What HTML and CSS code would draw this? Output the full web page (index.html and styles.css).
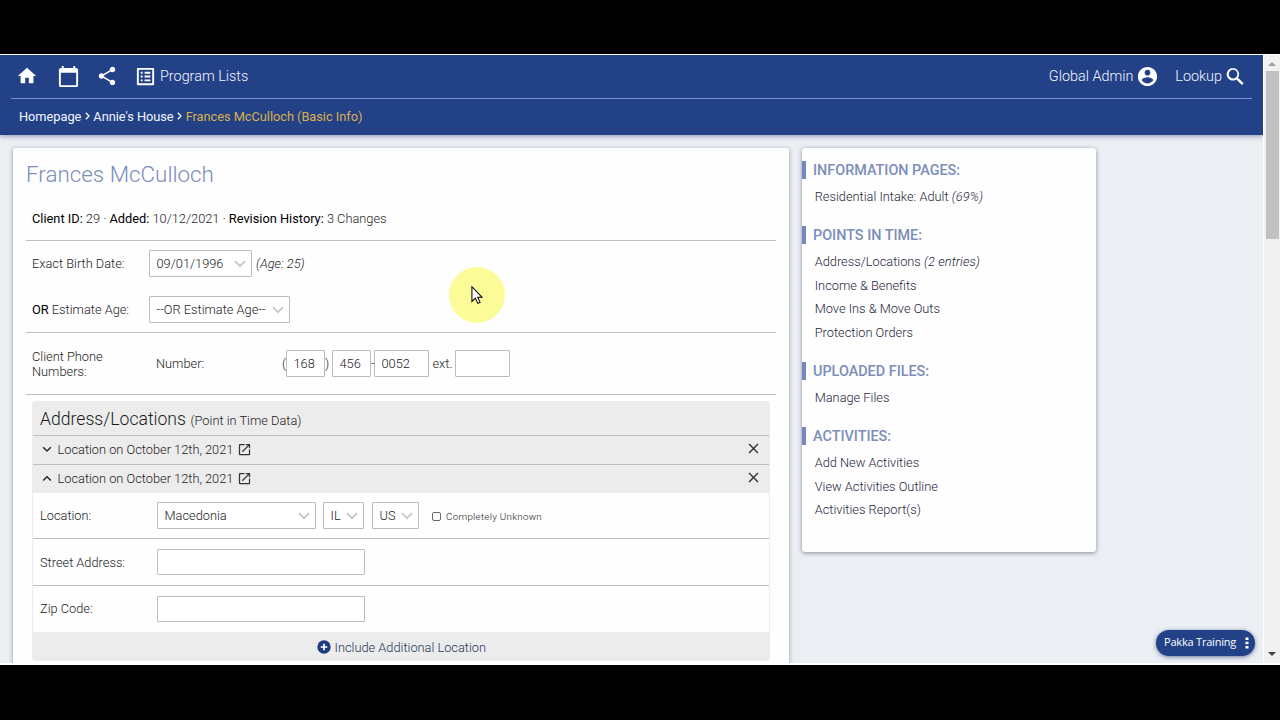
FILE: index.html
```html
<!DOCTYPE html>
<html lang="en">
<head>
<meta charset="utf-8">
<title>Frances McCulloch (Basic Info)</title>
<link rel="stylesheet" href="styles.css">
</head>
<body>
<svg width="0" height="0" class="defs">
  <symbol id="chev" viewBox="0 0 12 8"><path d="M1 1.2l5 5 5-5" fill="none" stroke="#c8c8c8" stroke-width="1.8"/></symbol>
  <symbol id="open" viewBox="0 0 24 24"><path d="M19 19H5V5h7V3H5a2 2 0 0 0-2 2v14a2 2 0 0 0 2 2h14c1.100 0 2-.9 2-2v-7h-2v7zM14 3v2h3.590l-9.830 9.830 1.410 1.410L19 6.410V10h2V3h-7z"/></symbol>
  <symbol id="close" viewBox="0 0 24 24"><path d="M19 6.410L17.590 5 12 10.590 6.410 5 5 6.410 10.590 12 5 17.590 6.410 19 12 13.410 17.590 19 19 17.590 13.410 12z"/></symbol>
</svg>
<div class="screen">
  <div class="app">
    <header class="header">
      <nav class="topbar">
        <svg class="icon home" viewBox="0 0 24 24"><path d="M10 20v-6h4v6h5v-8h3L12 3 2 12h3v8z"/></svg>
        <svg class="icon calendar" viewBox="0 0 24 24"><path d="M20 3h-1V1h-2v2H7V1H5v2H4c-1.100 0-2 .9-2 2v16c0 1.100.9 2 2 2h16c1.100 0 2-.9 2-2V5c0-1.100-.9-2-2-2zm0 18H4V8h16v13z"/></svg>
        <svg class="icon share" viewBox="0 0 24 24"><path d="M18 16.080c-.76 0-1.440.3-1.960.77L8.910 12.700c.05-.23.09-.46.09-.7s-.04-.47-.09-.7l7.050-4.110c.54.5 1.250.81 2.040.81 1.660 0 3-1.340 3-3s-1.340-3-3-3-3 1.340-3 3c0 .24.040.47.090.7L8.040 9.810C7.500 9.310 6.790 9 6 9c-1.660 0-3 1.340-3 3s1.340 3 3 3c.79 0 1.500-.31 2.040-.81l7.120 4.160c-.05.21-.08.43-.08.65 0 1.610 1.310 2.920 2.920 2.920s2.920-1.310 2.920-2.920-1.310-2.920-2.920-2.920z"/></svg>
        <svg class="icon list" viewBox="0 0 24 24"><path d="M19 5v14H5V5h14m1.100-2H3.900c-.5 0-.9.4-.9.9v16.200c0 .4.4.9.9.9h16.200c.4 0 .9-.5.9-.9V3.900c0-.5-.5-.9-.9-.9zM11 7h6v2h-6V7zm0 4h6v2h-6v-2zm0 4h6v2h-6zM7 7h2v2H7zm0 4h2v2H7zm0 4h2v2H7z"/></svg>
        <span class="programs">Program Lists</span>
        <span class="admin">Global Admin</span>
        <svg class="icon account" viewBox="0 0 24 24"><path d="M12 2C6.480 2 2 6.480 2 12s4.480 10 10 10 10-4.480 10-10S17.520 2 12 2zm0 3c1.660 0 3 1.340 3 3s-1.340 3-3 3-3-1.340-3-3 1.340-3 3-3zm0 14.200a7.200 7.200 0 0 1-6-3.220c.03-1.990 4-3.080 6-3.080 1.990 0 5.970 1.090 6 3.080a7.200 7.200 0 0 1-6 3.220z"/></svg>
        <span class="lookup">Lookup</span>
        <svg class="icon search" viewBox="0 0 24 24"><path d="M15.500 14h-.79l-.28-.27A6.500 6.500 0 1 0 13 15.100l.7.600V16l5 4.990L20.490 19l-4.990-5zm-6 0a4.500 4.500 0 1 1 0-9 4.500 4.500 0 0 1 0 9z"/></svg>
      </nav>
      <nav class="crumbs">
        <span>Homepage</span>
        <svg class="sep" viewBox="0 0 5 8"><path d="M.8.8L4 4 .8 7.200"/></svg>
        <span>Annie's House</span>
        <svg class="sep" viewBox="0 0 5 8"><path d="M.8.8L4 4 .8 7.200"/></svg>
        <span class="current">Frances McCulloch (Basic Info)</span>
      </nav>
    </header>

    <div class="content">
      <main class="card">
        <h1>Frances McCulloch</h1>
        <div class="meta"><b>Client ID:</b> 29 · <b>Added:</b> 10/12/2021 · <b>Revision History:</b> 3 Changes</div>
        <section class="birth">
          <div class="row"><label>Exact Birth Date:</label><span class="field date">09/01/1996<svg><use href="#chev"/></svg></span><i>(Age: 25)</i></div>
          <div class="row"><label><b>OR</b> Estimate Age:</label><span class="field estimate">--OR Estimate Age--<svg><use href="#chev"/></svg></span></div>
        </section>
        <section class="phone">
          <label>Client Phone<br>Numbers:</label>
          <span class="number">Number:</span>
          <span class="paren">(</span><span class="field area">168</span><span class="paren close-paren">)</span>
          <span class="field prefix">456</span><span class="dash">-</span><span class="field line">0052</span>
          <span class="ext">ext.</span><span class="field extension"></span>
        </section>
        <section class="locations">
          <div class="loc-title"><span class="big">Address/Locations</span><span class="hint">(Point in Time Data)</span></div>
          <div class="loc-head"><svg class="toggle" viewBox="0 0 10 7"><path d="M1.200 1.200L5 5l3.800-3.800"/></svg><span>Location on October 12th, 2021</span><svg class="open"><use href="#open"/></svg><svg class="close"><use href="#close"/></svg></div>
          <div class="loc-head second"><svg class="toggle" viewBox="0 0 10 7"><path d="M1.200 5.500L5 1.700l3.800 3.800"/></svg><span>Location on October 12th, 2021</span><svg class="open"><use href="#open"/></svg><svg class="close"><use href="#close"/></svg></div>
          <div class="loc-body">
            <div class="loc-row"><label>Location:</label><span class="field city">Macedonia<svg><use href="#chev"/></svg></span><span class="field state">IL<svg><use href="#chev"/></svg></span><span class="field country">US<svg><use href="#chev"/></svg></span><span class="check"></span><span class="unknown">Completely Unknown</span></div>
            <div class="loc-row street"><label>Street Address:</label><span class="field long"></span></div>
            <div class="loc-row zip"><label>Zip Code:</label><span class="field long"></span></div>
          </div>
          <div class="include"><svg viewBox="0 0 14 14"><circle cx="7" cy="7" r="6.700" fill="#1f3c80"/><path d="M7 3.700v6.600M3.700 7h6.600" stroke="#fff" stroke-width="1.700"/></svg><span>Include Additional Location</span></div>
        </section>
      </main>

      <aside class="side">
        <h2>INFORMATION PAGES:</h2>
        <ul><li>Residential Intake: Adult <i>(69%)</i></li></ul>
        <h2>POINTS IN TIME:</h2>
        <ul><li>Address/Locations <i>(2 entries)</i></li><li>Income &amp; Benefits</li><li>Move Ins &amp; Move Outs</li><li>Protection Orders</li></ul>
        <h2>UPLOADED FILES:</h2>
        <ul><li>Manage Files</li></ul>
        <h2>ACTIVITIES:</h2>
        <ul><li>Add New Activities</li><li>View Activities Outline</li><li>Activities Report(s)</li></ul>
      </aside>
    </div>
    <div class="pill"><span>Pakka Training</span><svg viewBox="0 0 4 12"><path d="M.5.500h3v2.500h-3zM.5 4.800h3v2.500h-3zM.5 9h3v2.500h-3z" fill="#fff"/></svg></div>
  </div>
  <div class="scrollbar">
    <svg viewBox="0 0 8 4"><path d="M4 0l4 4H0z" fill="#a0a0a0"/></svg>
    <div class="thumb"></div>
    <svg class="down" viewBox="0 0 8 4"><path d="M0 0h8L4 4z" fill="#404040"/></svg>
  </div>
  <div class="pointer"><svg viewBox="0 0 13 20"><path d="M1 1v16l3.800-3.600 2.500 5.700 2.500-1.100-2.500-5.500h4.800z" fill="#fff" stroke="#000" stroke-width="1.100"/></svg></div>
</div>
</body>
</html>
```

FILE: styles.css
```css
* { box-sizing: border-box; }
body { margin: 0; height: 720px; padding-top: 54px; background: #000; overflow: hidden; font: 300 12.8px/15px Roboto, sans-serif; color: #1c1c1c; }
.defs { position: absolute; }
b { font-weight: 400; color: #000; }
svg { flex: none; display: block; }
.screen { position: relative; display: flex; height: 611px; background: #fff; padding: 1px 0 2px; }
.app { position: relative; width: 1263px; height: 608px; background: #ebeef3; overflow: hidden; }

.header { height: 80px; background: #224187; color: #f2f6ff; box-shadow: 0 1px 5px rgba(30,40,110,.45); position: relative; }
.topbar { display: flex; align-items: center; height: 44px; margin: 0 11px; border-bottom: 1px solid #7590d4; font-size: 14.4px; padding: 0 5px 1px 5px; }
.icon { width: 22px; height: 22px; fill: #fff; }
.calendar { width: 23px; height: 23px; margin-left: 19px; }
.share { margin-left: 16px; }
.list { width: 23px; height: 23px; margin-left: 16px; }
.programs { margin-left: 3px; }
.admin { margin-left: auto; }
.account { width: 23px; height: 23px; margin-left: 3px; }
.lookup { margin-left: 16px; }
.search { width: 23px; height: 23px; margin-left: 2px; }
.crumbs { display: flex; align-items: center; height: 35px; padding-left: 19px; font-weight: 400; letter-spacing: -.03px; }
.sep { width: 5px; height: 8px; margin: 0 3.500px 2px; fill: none; stroke: #fff; stroke-width: 1.3; }
.current { color: #d9b04c; }

.content { display: flex; align-items: flex-start; gap: 13px; padding: 13px 0 0 13px; }
.card { width: 776px; height: 530px; background: #fefefe; border-radius: 3px; padding: 0 13px; box-shadow: 0 1px 4px rgba(30,45,70,.45); }
h1 { margin: 0; height: 48px; padding-top: 11px; font-size: 22.4px; line-height: 30px; font-weight: 300; color: #7b8db9; }
.meta { height: 45px; padding: 15px 6px 0; border-bottom: 1px solid #bfbfbf; }
.birth { height: 92px; padding: 9px 6px 0; border-bottom: 1px solid #bfbfbf; }
.row { display: flex; align-items: center; height: 27px; margin-bottom: 19px; }
.row label { width: 117px; }
.row i { margin-left: 4px; }
.field { display: flex; align-items: center; justify-content: space-between; height: 27px; border: 1px solid #bdbdbd; border-radius: 1px; padding: 0 5px 0 6.500px; background: #fff; white-space: nowrap; }
.field svg { width: 12px; height: 8px; }
.date { width: 103px; }
.estimate { width: 141px; }
.phone { display: flex; align-items: center; height: 62px; padding: 0 6px; border-bottom: 1px solid #bfbfbf; }
.phone label { width: 124px; }
.number { width: 126px; }
.paren { width: 4px; }
.close-paren { width: 7px; }
.area { width: 39px; }
.prefix { width: 39px; }
.dash { width: 3px; }
.line { width: 55px; }
.ext { width: 26px; padding-left: 3.5px; }
.extension { width: 55px; }

.locations { margin: 6px 6px 0; height: 260px; border: solid #ececec; border-width: 0 1px; border-radius: 4px; background: #ececec; }
.loc-title { display: flex; align-items: baseline; height: 35px; padding: 7px 7px 0; border-bottom: 1px solid #bfbfbf; }
.big { font-size: 17.6px; line-height: 22px; }
.hint { margin-left: 4.500px; }
.loc-head { display: flex; align-items: center; height: 29px; padding: 0 9px 1px 8.500px; border-bottom: 1px solid #bfbfbf; }
.second { height: 28px; border-bottom: 0; }
.toggle { width: 10px; height: 7px; fill: none; stroke: #222; stroke-width: 1.4; }
.loc-head span { margin-left: 6px; }
.open { width: 15px; height: 15px; margin-left: 3.500px; fill: #333; }
.close { width: 17px; height: 17px; margin: 0 -2px 2px auto; fill: #333; }
.loc-body { background: #fefefe; }
.loc-row { display: flex; align-items: center; height: 46px; border-bottom: 1px solid #bfbfbf; padding-left: 7px; }
.loc-row label { width: 117px; }
.street { height: 47px; }
.zip { height: 46px; border-bottom: 0; }
.zip label { padding-bottom: 1px; }
.city { width: 159px; }
.state { width: 41px; margin-left: 7px; }
.country { width: 47px; margin-left: 8px; }
.long { width: 208px; height: 26px; }
.check { width: 9px; height: 9px; border: 1px solid #666; border-radius: 2px; margin: 1px 0 0 13px; background: #fff; }
.unknown { font-size: 9.8px; letter-spacing: .28px; margin: 2px 0 0 5px; }
.include { display: flex; align-items: center; height: 29px; padding: 1px 0 0 283.500px; color: #263458; }
.include svg { width: 14px; height: 14px; }
.include span { margin-left: 4px; }

.side { width: 294px; height: 404px; background: #fefefe; border-radius: 3px; box-shadow: 0 1px 4px rgba(30,45,70,.5); padding-top: 13px; }
h2 { margin: 0; height: 18px; border-left: 4px solid #7487c0; padding-left: 7px; font-size: 14.4px; line-height: 20px; font-weight: 500; color: #7b8db9; }
ul { list-style: none; margin: 0 0 18px; padding: 6px 0 0 12.700px; }
li { height: 23.4px; line-height: 23.8px; color: #1f2740; }
li i { letter-spacing: .1px; }

.pill { position: absolute; left: 1156px; top: 575px; width: 99px; height: 26px; display: flex; align-items: center; border-radius: 13px; background: #224187; color: #fff; padding: 0 0 1px 8px; font: 400 11px "Open Sans", sans-serif; letter-spacing: -.2px; white-space: nowrap; box-shadow: 0 1px 4px rgba(20,40,100,.6); }
.pill span { padding-bottom: 3px; }
.pill svg { width: 4px; height: 12px; margin-left: auto; margin-right: 6px; }

.scrollbar { width: 17px; height: 608px; background: #f1f1f1; border-left: 1px solid #fff; display: flex; flex-direction: column; align-items: center; padding: 7px 0; }
.scrollbar svg { width: 8px; height: 4px; }
.thumb { width: 13px; height: 168px; margin-top: 5px; background: #c1c1c1; }
.scrollbar .down { margin-top: auto; }
.pointer { position: absolute; left: 449px; top: 213px; width: 56px; height: 56px; border-radius: 50%; background: #fbfb98; }
.pointer svg { position: absolute; left: 22px; top: 18px; width: 12px; height: 20px; }
```
